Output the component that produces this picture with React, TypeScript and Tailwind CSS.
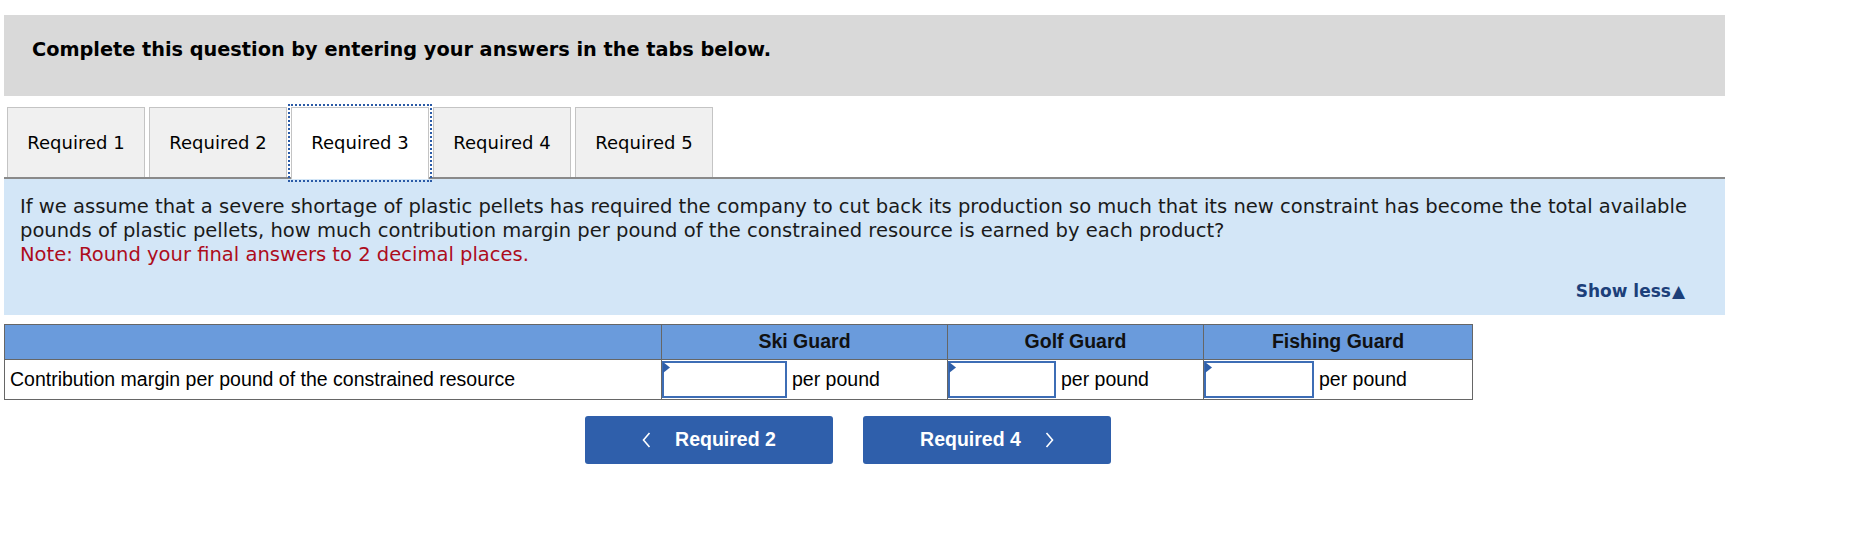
import React from 'react';

const tabs = ['Required 1', 'Required 2', 'Required 3', 'Required 4', 'Required 5'];

const products = [
    { name: 'Ski Guard', input: 'w-[125px]' },
    { name: 'Golf Guard', input: 'w-[108px]' },
    { name: 'Fishing Guard', input: 'w-[110px]' },
];

function AnswerInput({ width }: { width: string }) {
    return (
        <div className={`relative h-[37px] ${width} shrink-0 border-2 border-[#3d6db5] bg-white`}>
            {/* little flag in the corner of answer boxes */}
            <svg className="absolute left-[-1px] top-[-1px]" width="8" height="12" viewBox="0 0 8 12">
                <polygon points="0,0 7,5.5 0,11" fill="#2e5ea8" />
            </svg>
            <input type="text" className="h-full w-full bg-transparent px-1 outline-none" />
        </div>
    );
}

export default function App() {
    const verdana = "font-['DejaVu_Sans',Verdana,sans-serif]";
    const arial = "font-['Liberation_Sans',Arial,sans-serif]";

    return (
        <div className="min-h-screen bg-white pl-[4px] pt-[15px] text-black">
            <div className="w-[1721px]">
                {/* Instructions header */}
                <div className="h-[81px] bg-[#d9d9d9] pl-[28px] pt-[23px]">
                    <h2 className={`${verdana} text-[19.3px] font-bold leading-[24px]`}>
                        Complete this question by entering your answers in the tabs below.
                    </h2>
                </div>

                {/* Tabs */}
                <div className="mt-[11px] flex items-start gap-[4px] border-b-2 border-[#8a8a8a] pl-[3px]">
                    {tabs.map((tab, i) =>
                        i === 2 ? (
                            <button
                                key={tab}
                                className={`${verdana} relative -mb-[2px] flex h-[72px] w-[138px] items-center justify-center border border-b-0 border-[#c4c4c4] bg-white pb-[2px] text-[18px] outline-2 outline-offset-1 outline-[#2a5aa6] outline-dotted`}
                            >
                                {tab}
                            </button>
                        ) : (
                            <button
                                key={tab}
                                className={`${verdana} flex h-[70px] w-[138px] items-center justify-center border border-b-0 border-[#c4c4c4] bg-[#f0f0f0] text-[18px]`}
                            >
                                {tab}
                            </button>
                        )
                    )}
                </div>

                {/* Question */}
                <div className={`${verdana} h-[136px] bg-[#d3e6f7] pl-[16px] pr-[20px] pt-[16px] text-[19.55px] leading-[24px]`}>
                    <p className="text-[#1a1a1a]">
                        If we assume that a severe shortage of plastic pellets has required the company to cut back its production so much that its new constraint has become the total available pounds of plastic pellets, how much contribution margin per pound of the constrained resource is earned by each product?
                    </p>
                    <p className="text-[#ad0c1c]">Note: Round your final answers to 2 decimal places.</p>
                    <div className="mt-[12px] flex justify-end pr-[20px]">
                        <button className="flex items-center text-[17px] font-bold text-[#1c3f7a]">
                            Show less
                            <span className="ml-[1px] text-[17px] leading-none">▲</span>
                        </button>
                    </div>
                </div>
            </div>

            {/* Answer table */}
            <table className={`${arial} mt-[9px] w-[1468px] table-fixed border-collapse border border-[#666666] text-[19.5px]`}>
                <colgroup>
                    <col className="w-[657px]" />
                    <col className="w-[286px]" />
                    <col className="w-[256px]" />
                    <col className="w-[269px]" />
                </colgroup>
                <thead>
                    <tr className="h-[35px] bg-[#6a9bdc]">
                        <th className="border border-[#666666]"></th>
                        {products.map((p) => (
                            <th key={p.name} className="border border-[#666666] text-center font-bold text-[#111]">
                                {p.name}
                            </th>
                        ))}
                    </tr>
                </thead>
                <tbody>
                    <tr className="h-[40px]">
                        <td className="border border-[#666666] pl-[5px]">Contribution margin per pound of the constrained resource</td>
                        {products.map((p) => (
                            <td key={p.name} className="border border-[#666666] p-0">
                                <div className="flex items-center">
                                    <AnswerInput width={p.input} />
                                    <span className="ml-[5px]">per pound</span>
                                </div>
                            </td>
                        ))}
                    </tr>
                </tbody>
            </table>

            {/* Prev / next */}
            <div className={`${arial} ml-[581px] mt-[16px] flex gap-[30px]`}>
                <button className="flex h-[48px] w-[248px] items-center justify-center gap-[24px] rounded-[3px] bg-[#2f5fab] text-[19.5px] font-bold text-white">
                    <svg width="9" height="16" viewBox="0 0 9 16" fill="none" stroke="white" strokeWidth="1.6">
                        <polyline points="7.5,1 1.5,8 7.5,15" />
                    </svg>
                    Required 2
                </button>
                <button className="flex h-[48px] w-[248px] items-center justify-center gap-[24px] rounded-[3px] bg-[#2f5fab] text-[19.5px] font-bold text-white">
                    Required 4
                    <svg width="9" height="16" viewBox="0 0 9 16" fill="none" stroke="white" strokeWidth="1.6">
                        <polyline points="1.5,1 7.5,8 1.5,15" />
                    </svg>
                </button>
            </div>
        </div>
    );
}
